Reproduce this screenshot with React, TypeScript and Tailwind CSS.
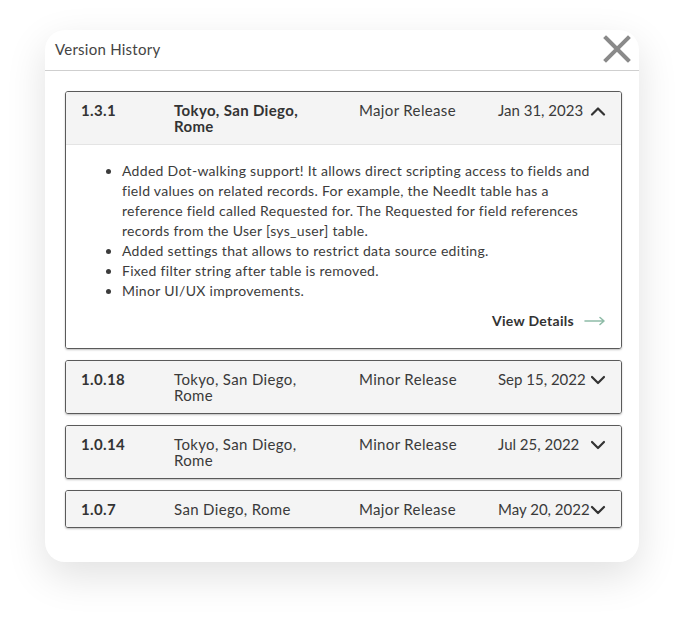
import React from 'react';

interface Release {
  version: string;
  locations: string;
  kind: string;
  date: string;
  open?: boolean;
}

const releases: Release[] = [
  { version: '1.3.1', locations: 'Tokyo, San Diego, Rome', kind: 'Major Release', date: 'Jan 31, 2023', open: true },
  { version: '1.0.18', locations: 'Tokyo, San Diego, Rome', kind: 'Minor Release', date: 'Sep 15, 2022' },
  { version: '1.0.14', locations: 'Tokyo, San Diego, Rome', kind: 'Minor Release', date: 'Jul 25, 2022' },
  { version: '1.0.7', locations: 'San Diego, Rome', kind: 'Major Release', date: 'May 20, 2022' },
];

const notes = [
  'Added Dot-walking support! It allows direct scripting access to fields and field values on related records. For example, the NeedIt table has a reference field called Requested for. The Requested for field references records from the User [sys_user] table.',
  'Added settings that allows to restrict data source editing.',
  'Fixed filter string after table is removed.',
  'Minor UI/UX improvements.',
];

function Chevron({ up }: { up?: boolean }) {
  return (
    <svg width="16" height="10" viewBox="0 0 16 10" className="mt-[4px]">
      <path
        d={up ? 'M2 8.5 L8 2.5 L14 8.5' : 'M2 2 L8 8 L14 2'}
        fill="none"
        stroke="#333"
        strokeWidth="2.2"
        strokeLinecap="round"
        strokeLinejoin="round"
      />
    </svg>
  );
}

function ReleaseItem({ r }: { r: Release }) {
  return (
    <div className="border border-[#5a5a5a] rounded-[3px] shadow-[0_1px_2px_rgba(0,0,0,0.25)] overflow-hidden">
      <div className="bg-[#f4f4f4] grid grid-cols-[93px_185px_139px_1fr_16px] px-[15px] py-[10px] text-[15px] leading-[16px] tracking-[0.35px] text-[#3a3a3a]">
        <span className="font-bold text-[#333]">{r.version}</span>
        <span className={r.open ? 'font-bold text-[#333] pr-10' : 'pr-10'}>{r.locations}</span>
        <span>{r.kind}</span>
        <span className="whitespace-nowrap tracking-normal">{r.date}</span>
        <Chevron up={r.open} />
      </div>
      {r.open && (
        <div className="border-t border-[#e4e4e4] bg-white pt-[16px] pb-[17px] pr-[15px]">
          <ul className="list-disc pl-[56px] pr-[12px] text-[14px] leading-[20px] tracking-[0.3px] text-[#3c3c3c]">
            {notes.map((n) => (
              <li key={n}>{n}</li>
            ))}
          </ul>
          <div className="flex justify-end items-center gap-[10px] mt-[9px] text-[14px] tracking-[0.3px] font-bold text-[#333]">
            <span>View Details</span>
            <svg width="22" height="10" viewBox="0 0 22 10">
              <path d="M1 5 H20 M16 1.5 L20 5 L16 8.5" fill="none" stroke="#8fbca8" strokeWidth="1.6" strokeLinecap="round" strokeLinejoin="round" />
            </svg>
          </div>
        </div>
      )}
    </div>
  );
}

export default function App() {
  return (
    <main className="min-h-screen bg-white pt-[30px] pl-[45px]" style={{ fontFamily: 'Lato, "Noto Sans", sans-serif' }}>
      <div className="w-[594px] h-[532px] bg-white rounded-[20px] shadow-[0_14px_40px_rgba(0,0,0,0.12)]">
        {/* Header */}
        <div className="flex items-center justify-between h-[41px] pl-[10px] pr-[8px] border-b border-[#cfcfcf]">
          <h1 className="text-[15px] tracking-[0.25px] text-[#444] mt-[-2px]">Version History</h1>
          <svg width="28" height="28" viewBox="0 0 28 28" className="mt-[-3px]">
            <path d="M3 3 L25 25 M25 3 L3 25" stroke="#8a8a8a" strokeWidth="4" strokeLinecap="square" />
          </svg>
        </div>

        <div className="flex flex-col gap-[11px] pl-[20px] pr-[17px] pt-[20px]">
          {releases.map((r) => (
            <ReleaseItem key={r.version} r={r} />
          ))}
        </div>
      </div>
    </main>
  );
}
